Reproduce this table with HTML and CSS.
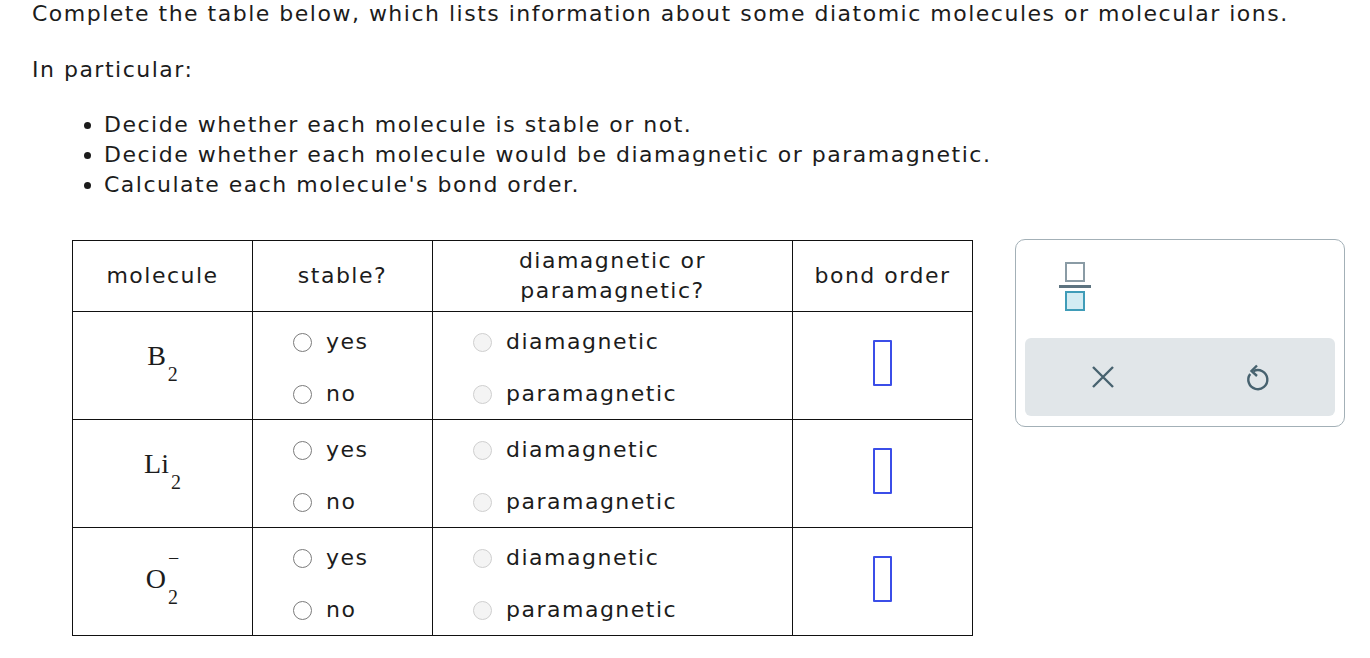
FILE: index.html
```html
<!DOCTYPE html>
<html lang="en">
<head>
<meta charset="utf-8">
<title>Diatomic molecules</title>
<link rel="stylesheet" href="styles.css">
</head>
<body>
<div class="page">
  <p class="lead">Complete the table below, which lists information about some diatomic molecules or molecular ions.</p>
  <p class="lead">In particular:</p>
  <ul class="tasks">
    <li>Decide whether each molecule is stable or not.</li>
    <li>Decide whether each molecule would be diamagnetic or paramagnetic.</li>
    <li>Calculate each molecule's bond order.</li>
  </ul>

  <div class="work">
    <table class="grid">
      <colgroup>
        <col class="c-mol"><col class="c-stab"><col class="c-mag"><col class="c-bond">
      </colgroup>
      <thead>
        <tr>
          <th>molecule</th>
          <th>stable?</th>
          <th>diamagnetic or<br>paramagnetic?</th>
          <th>bond order</th>
        </tr>
      </thead>
      <tbody>
        <tr>
          <td class="mol"><span class="chem"><span class="el">B</span><span class="stack"><span class="sub">2</span></span></span></td>
          <td class="opts">
            <label class="opt"><input type="radio" class="rd" name="s1">yes</label>
            <label class="opt"><input type="radio" class="rd" name="s1">no</label>
          </td>
          <td class="opts">
            <label class="opt"><input type="radio" class="rd light" name="m1">diamagnetic</label>
            <label class="opt"><input type="radio" class="rd light" name="m1">paramagnetic</label>
          </td>
          <td class="bond"><span class="box"></span></td>
        </tr>
        <tr>
          <td class="mol"><span class="chem"><span class="el">Li</span><span class="stack"><span class="sub">2</span></span></span></td>
          <td class="opts">
            <label class="opt"><input type="radio" class="rd" name="s2">yes</label>
            <label class="opt"><input type="radio" class="rd" name="s2">no</label>
          </td>
          <td class="opts">
            <label class="opt"><input type="radio" class="rd light" name="m2">diamagnetic</label>
            <label class="opt"><input type="radio" class="rd light" name="m2">paramagnetic</label>
          </td>
          <td class="bond"><span class="box"></span></td>
        </tr>
        <tr>
          <td class="mol"><span class="chem ion"><span class="el">O</span><span class="stack"><span class="sup">−</span><span class="sub">2</span></span></span></td>
          <td class="opts">
            <label class="opt"><input type="radio" class="rd" name="s3">yes</label>
            <label class="opt"><input type="radio" class="rd" name="s3">no</label>
          </td>
          <td class="opts">
            <label class="opt"><input type="radio" class="rd light" name="m3">diamagnetic</label>
            <label class="opt"><input type="radio" class="rd light" name="m3">paramagnetic</label>
          </td>
          <td class="bond"><span class="box"></span></td>
        </tr>
      </tbody>
    </table>

    <div class="panel">
      <div class="tools">
        <svg class="frac" width="32" height="50" viewBox="0 0 32 50">
          <rect x="7" y="1" width="18" height="18" fill="#fff" stroke="#8a9ba5" stroke-width="2"/>
          <rect x="0" y="23" width="32" height="3" fill="#5d7380"/>
          <rect x="7" y="30" width="18" height="18" fill="#d3ecf3" stroke="#3f9cb8" stroke-width="2"/>
        </svg>
      </div>
      <div class="actions">
        <button class="act" type="button" aria-label="clear">
          <svg width="24" height="24" viewBox="0 0 24 24">
            <path d="M2 2 L22 22 M22 2 L2 22" stroke="#47626f" stroke-width="2.4" fill="none"/>
          </svg>
        </button>
        <button class="act" type="button" aria-label="undo">
          <svg width="28" height="30" viewBox="0 0 28 30">
            <path d="M9.5 9.2 A9.5 9.5 0 1 1 6.2 12" stroke="#47626f" stroke-width="2.4" fill="none"/>
            <path d="M13 3.5 L7.5 9 L13 14" stroke="#47626f" stroke-width="2.4" fill="none"/>
          </svg>
        </button>
      </div>
    </div>
  </div>
</div>
</body>
</html>
```

FILE: styles.css
```css
* { box-sizing: border-box; }
html, body { margin: 0; padding: 0; background: #fff; }
body {
  font-family: "DejaVu Sans", Verdana, sans-serif;
  font-size: 22px;
  letter-spacing: 1.5px;
  color: #1c1c1c;
}
.page { padding: 0 0 0 32px; }
.lead {
  margin: 0;
  line-height: 28px;
}
.lead + .lead { margin-top: 28px; }
.tasks {
  margin: 26px 0 0 0;
  padding-left: 72px;
  line-height: 30px;
}
.work {
  display: flex;
  align-items: flex-start;
  gap: 42px;
  margin: 39px 0 0 40px;
}
.grid {
  border-collapse: collapse;
  table-layout: fixed;
  width: 901px;
  margin-top: 1px;
}
.c-mol, .c-stab, .c-bond { width: 180px; }
.c-mag { width: 360px; }
.grid th, .grid td {
  border: 1px solid #111;
  padding: 0;
}
.grid th {
  font-weight: normal;
  height: 71px;
  line-height: 30px;
  text-align: center;
  vertical-align: middle;
}
.grid td { height: 108px; vertical-align: top; }
.mol { text-align: center; vertical-align: middle !important; }
.chem {
  display: inline-flex;
  align-items: flex-start;
  font-family: "Liberation Serif", "Times New Roman", serif;
  font-size: 28px;
  line-height: 28px;
  letter-spacing: 0;
  padding-bottom: 6px;
}
.chem.ion .el { margin-top: 14px; }
.stack {
  display: inline-flex;
  flex-direction: column;
  align-items: flex-start;
  margin-left: 2px;
  font-size: 20px;
}
.sup { height: 14px; line-height: 14px; }
.sub { line-height: 20px; margin-top: 22px; }
.opts { padding: 16px 0 0 40px !important; }
.opt {
  display: flex;
  align-items: center;
  height: 28px;
  line-height: 28px;
  cursor: pointer;
}
.opt + .opt { margin-top: 24px; }
.rd {
  appearance: none;
  -webkit-appearance: none;
  width: 19px;
  height: 19px;
  margin: 0 14px 0 0;
  border: 1.5px solid #7b7b7b;
  border-radius: 50%;
  background: #fff;
  flex: none;
}
.rd.light {
  border-color: #cfcfcf;
  background: #f4f4f4;
}
.bond { text-align: center; vertical-align: middle !important; }
.box {
  display: inline-block;
  width: 19px;
  height: 46px;
  border: 2px solid #3b4ee8;
  border-radius: 1px;
  vertical-align: middle;
  margin-bottom: 6px;
}
.panel {
  width: 330px;
  height: 188px;
  border: 1px solid #a3b0b7;
  border-radius: 10px;
  padding: 22px 9px 10px 9px;
  display: flex;
  flex-direction: column;
  justify-content: space-between;
}
.tools { padding-left: 34px; height: 50px; }
.frac { display: block; }
.actions {
  display: flex;
  height: 78px;
  background: #e1e6e9;
  border-radius: 6px;
}
.act {
  flex: 1;
  border: 0;
  background: transparent;
  display: flex;
  align-items: center;
  justify-content: center;
  padding: 0;
  cursor: pointer;
}
.act svg { display: block; }
```
